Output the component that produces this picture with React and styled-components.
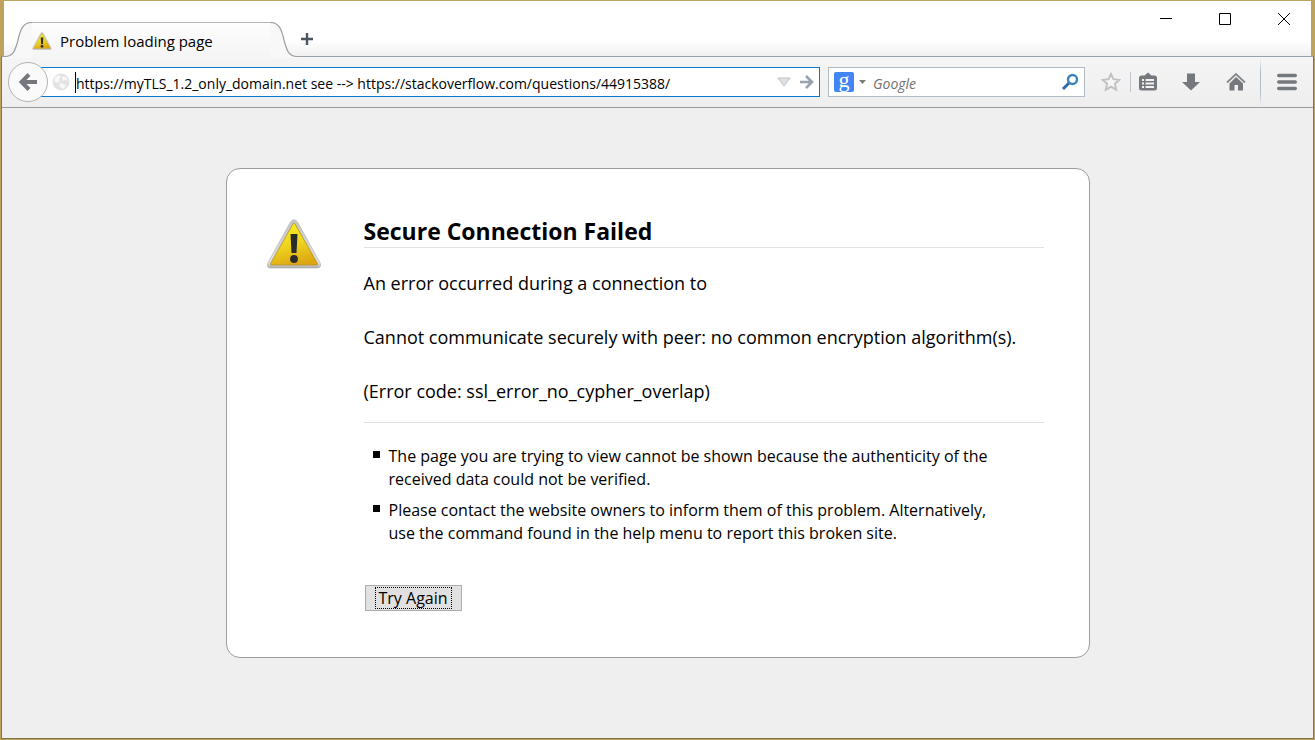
import { useId, useState } from "react";
import styled, { createGlobalStyle } from "styled-components";

const GlobalStyle = createGlobalStyle`
  * {
    box-sizing: border-box;
  }

  body {
    margin: 0;
    font-family: "Open Sans", "Noto Sans", sans-serif;
    color: #000;
  }

  button,
  input {
    font-family: inherit;
  }
`;

const Frame = styled.div`
  display: flex;
  flex-direction: column;
  min-height: 100vh;
  padding: 1px;
  background: #bfa35c;
`;

const TitleBar = styled.header`
  display: flex;
  justify-content: space-between;
  height: 56px;
  margin: 0 3px;
  background: linear-gradient(#fff 70%, #efefef);
`;

const TabStrip = styled.div`
  display: flex;
  align-items: flex-end;
  margin-left: -2px;
`;

const Tab = styled.div`
  display: flex;
  position: relative;
  height: 36px;
  margin-bottom: -1px;
`;

const TabLabel = styled.button`
  display: flex;
  align-items: center;
  gap: 8px;
  width: 238px;
  padding: 0;
  border: 0;
  border-top: 1px solid #b4b8bd;
  background: linear-gradient(#fdfdfd, #f5f5f5);
  color: #000;
  font-size: 15px;
  text-align: left;
`;

const NewTab = styled.button`
  display: flex;
  margin: 0 0 11px;
  padding: 0;
  border: 0;
  background: none;
`;

const WindowControls = styled.div`
  display: flex;
  align-items: flex-start;
  margin-right: -2px;
`;

const WindowButton = styled.button`
  display: flex;
  align-items: center;
  justify-content: center;
  width: 59px;
  height: 36px;
  padding: 0;
  border: 0;
  background: none;
`;

const Client = styled.div`
  display: flex;
  flex: 1;
  flex-direction: column;
  border: 1px solid #84744a;
  border-top: 1px solid #98a0a8;
  margin-top: -1px;
`;

const NavBar = styled.nav`
  display: flex;
  align-items: center;
  height: 51px;
  padding: 0 16px 0 6px;
  border-bottom: 1px solid #9a9b9c;
  background: linear-gradient(#f5f5f5, #eee);
`;

const BackButton = styled.button`
  display: flex;
  align-items: center;
  justify-content: center;
  z-index: 1;
  width: 40px;
  height: 40px;
  padding: 0;
  border: 1px solid #b3b3b5;
  border-radius: 50%;
  background: #fafafa;
`;

const Field = styled.form`
  display: flex;
  align-items: center;
  height: 30px;
  border: 1px solid ${(props) => (props.$focused ? "#0a78d0" : "#b2bac4")};
  background: #fff;
`;

const UrlField = styled(Field)`
  flex: 1;
  margin-left: -8px;
  padding: 0 5px 0 11px;
`;

const SearchField = styled(Field)`
  width: 257px;
  margin-left: 8px;
  padding: 0 5px;
`;

const TextInput = styled.input`
  flex: 1;
  min-width: 0;
  height: 28px;
  padding: 2px 0 0;
  border: 0;
  outline: 0;
  background: none;
  color: #000;
  font-size: 14px;

  &::placeholder {
    color: #707070;
    font-style: italic;
    opacity: 1;
  }
`;

const Caret = styled.span`
  width: 1px;
  height: 21px;
  margin-left: 5px;
  background: #000;
`;

const FieldButton = styled.button`
  display: flex;
  padding: 0;
  border: 0;
  margin-left: ${(props) => props.$gap || 0}px;
  margin-right: ${(props) => props.$after || 0}px;
  background: none;
`;

const EngineBadge = styled.span`
  width: 20px;
  height: 20px;
  border-radius: 2px;
  background: #4285f4;
  color: #fff;
  font-family: "Liberation Serif", serif;
  font-size: 22px;
  line-height: 16px;
  text-align: center;
`;

const Tools = styled.div`
  display: flex;
  align-items: center;
  height: 100%;
  padding-left: 16px;
`;

const ToolButton = styled.button`
  display: flex;
  align-items: center;
  justify-content: center;
  width: 20px;
  height: 20px;
  margin-left: ${(props) => props.$gap || 0}px;
  padding: 0;
  border: 0;
  background: none;
`;

const Divider = styled.span`
  width: 1px;
  height: ${(props) => (props.$tall ? "48px" : "20px")};
  margin-left: ${(props) => props.$gap}px;
  background: ${(props) =>
    props.$tall
      ? "linear-gradient(transparent, #b0bccb 30%, #b0bccb 70%, transparent)"
      : "#c0c6ce"};
`;

const Page = styled.main`
  flex: 1;
  padding: 60px 24px;
  background: #efefef;
`;

const ErrorCard = styled.section`
  display: flex;
  align-items: flex-start;
  gap: 42px;
  max-width: 864px;
  margin: 0 auto;
  padding: 46px 45px 46px 39px;
  border: 1px solid #9c9c9c;
  border-radius: 14px;
  background: #fff;
`;

const CardIcon = styled.div`
  display: flex;
  flex: none;
  padding-top: 4px;
`;

const CardBody = styled.div`
  flex: 1;
  min-width: 0;
`;

const Title = styled.h1`
  margin: 0;
  border-bottom: 1px solid #e2e2e2;
  font-size: 23px;
  line-height: 32px;
`;

const Description = styled.div`
  padding: 22px 0 17px;
  border-bottom: 1px solid #e2e2e2;
  font-size: 18px;
  line-height: 27px;
`;

const Line = styled.p`
  margin: 0;

  & + & {
    margin-top: 27px;
  }
`;

const Hints = styled.ul`
  display: flex;
  flex-direction: column;
  gap: 8px;
  margin: 22px 0 40px;
  padding: 0 45px 0 9px;
  list-style: none;
  font-size: 16px;
  line-height: 23px;
`;

const Hint = styled.li`
  display: flex;
  gap: 9px;

  &::before {
    content: "";
    flex: none;
    width: 7px;
    height: 7px;
    margin-top: 6px;
    background: #000;
  }
`;

const RetryButton = styled.button`
  display: block;
  height: 26px;
  margin-left: 1px;
  padding: 0 9px;
  border: 1px solid #adadad;
  background: #e1e1e1;
  color: #000;
  font-size: 16px;
`;

const FocusRing = styled.span`
  display: block;
  padding: 0 3px;
  border: 1px dotted #000;
  line-height: 20px;
`;

function WarningIcon({ width, height }) {
  const id = useId();

  return (
    <svg width={width} height={height} viewBox="0 0 56 50" aria-hidden="true">
      <defs>
        <linearGradient id={`${id}-rim`} x1="0" y1="0" x2="0" y2="1">
          <stop offset="0" stopColor="#c4c4c4" />
          <stop offset=".9" stopColor="#e2e2e2" />
          <stop offset="1" stopColor="#a8a8a8" />
        </linearGradient>
        <linearGradient id={`${id}-fill`} x1="0.3" y1="0" x2="0.6" y2="1">
          <stop offset="0" stopColor="#f6ee20" />
          <stop offset=".5" stopColor="#efd51f" />
          <stop offset="1" stopColor="#dca511" />
        </linearGradient>
      </defs>
      <path
        d="M24.5 3Q28-1.5 31.5 3L54 43.500Q56 49 51 49H5Q0 49 2 43.500Z"
        fill={`url(#${id}-rim)`}
        stroke="#b5b5b5"
        strokeWidth=".7"
      />
      <path
        d="M27.200 4.500Q28 3.300 28.800 4.500L51.500 44.500Q52 46 50.500 46H5.500Q4 46 4.500 44.500Z"
        fill={`url(#${id}-fill)`}
        stroke="#b29126"
        strokeWidth=".8"
      />
      <path d="M24.500 15H31.500L30.500 34H25.500Z" fill="#2a2c2c" />
      <circle cx="28" cy="40" r="3.900" fill="#2a2c2c" />
    </svg>
  );
}

function TabCurve({ flip }) {
  return (
    <svg width="30" height="36" viewBox="0 0 30 36" aria-hidden="true">
      <g transform={flip ? "matrix(-1 0 0 1 30 0)" : undefined}>
        <path
          d="M0 36V34.500H3C11 34.500 13 29 15.500 20C18 9 20 .5 30 .5V36Z"
          fill="#f8f8f8"
        />
        <path
          d="M0 34.500H3C11 34.500 13 29 15.500 20C18 9 20 .5 30 .5"
          fill="none"
          stroke="#9aa0a7"
          strokeWidth="1.200"
        />
      </g>
    </svg>
  );
}

function GlobeIcon() {
  return (
    <svg width="18" height="18" viewBox="0 0 18 18" aria-hidden="true">
      <circle cx="9" cy="9" r="8.500" fill="#e3e3e3" />
      <path
        d="M3 4L7 2L9 4L7 6L8 8L5 10L2 8ZM11 3L15 5L16 8L13 7L11 8L10 5ZM8 10L12 11L14 13L11 16L9 15L7 12Z"
        fill="#f7f7f7"
      />
    </svg>
  );
}

function App() {
  const [url, setUrl] = useState(
    "https://myTLS_1.2_only_domain.net see --> https://stackoverflow.com/questions/44915388/"
  );
  const [query, setQuery] = useState("");

  const handleSubmit = (e) => {
    e.preventDefault();
  };

  return (
    <>
      <GlobalStyle />
      <Frame>
        <TitleBar>
          <TabStrip>
            <Tab>
              <TabCurve />
              <TabLabel type="button">
                <WarningIcon width={20} height={18} />
                Problem loading page
              </TabLabel>
              <TabCurve flip />
            </Tab>
            <NewTab type="button" aria-label="New tab">
              <svg width="14" height="14" viewBox="0 0 14 14">
                <path d="M7 1V13M1 7H13" stroke="#4c5660" strokeWidth="2.400" />
              </svg>
            </NewTab>
          </TabStrip>
          <WindowControls>
            <WindowButton type="button" aria-label="Minimize">
              <svg width="12" height="12" viewBox="0 0 12 12">
                <path d="M0 5.500H12" stroke="#000" />
              </svg>
            </WindowButton>
            <WindowButton type="button" aria-label="Maximize">
              <svg width="12" height="12" viewBox="0 0 12 12">
                <path d="M.5 .5H11.500V11.500H.5Z" fill="none" stroke="#000" />
              </svg>
            </WindowButton>
            <WindowButton type="button" aria-label="Close">
              <svg width="12" height="12" viewBox="0 0 12 12">
                <path d="M0 0L12 12M12 0L0 12" stroke="#000" />
              </svg>
            </WindowButton>
          </WindowControls>
        </TitleBar>

        <Client>
          <NavBar>
            <BackButton type="button" aria-label="Back">
              <svg width="18" height="18" viewBox="0 0 18 18">
                <path
                  d="M10 1.500L2.500 9L10 16.500M3 9H18"
                  fill="none"
                  stroke="#73777c"
                  strokeWidth="4"
                />
              </svg>
            </BackButton>
            <UrlField $focused onSubmit={handleSubmit}>
              <GlobeIcon />
              <Caret />
              <TextInput
                aria-label="Address"
                value={url}
                onChange={(e) => setUrl(e.target.value)}
              />
              <FieldButton type="button" aria-label="Show history">
                <svg width="14" height="10" viewBox="0 0 14 10">
                  <path d="M1 1H13L7 9Z" fill="#dce1e5" stroke="#bcc3c9" />
                </svg>
              </FieldButton>
              <FieldButton aria-label="Go" $gap={8}>
                <svg width="15" height="14" viewBox="0 0 15 14">
                  <path
                    d="M1 7H12M7 1L13 7L7 13"
                    fill="none"
                    stroke="#98a3ae"
                    strokeWidth="2.600"
                  />
                </svg>
              </FieldButton>
            </UrlField>
            <SearchField onSubmit={handleSubmit}>
              <FieldButton type="button" aria-label="Search engine" $after={6}>
                <EngineBadge>g</EngineBadge>
                <svg width="13" height="20" viewBox="0 0 13 20">
                  <path d="M5 8H12L8.500 12Z" fill="#7b7b7b" />
                </svg>
              </FieldButton>
              <TextInput
                aria-label="Search"
                placeholder="Google"
                value={query}
                onChange={(e) => setQuery(e.target.value)}
              />
              <FieldButton aria-label="Search the web">
                <svg width="18" height="18" viewBox="0 0 18 18">
                  <path d="M2 16L8 10" stroke="#2f6aa8" strokeWidth="3" />
                  <circle
                    cx="11.500"
                    cy="6.500"
                    r="4.500"
                    fill="#fff"
                    stroke="#3b85bd"
                    strokeWidth="2.400"
                  />
                </svg>
              </FieldButton>
            </SearchField>
            <Tools>
              <ToolButton type="button" aria-label="Bookmark this page">
                <svg width="20" height="20" viewBox="0 0 20 20">
                  <path
                    d="M10 2L12.400 7.200L18.300 7.900L13.900 11.700L15.200 17.800L10 14.700L4.800 17.800L6.100 11.700L1.700 7.900L7.600 7.200Z"
                    fill="#f5f5f5"
                    stroke="#c0c1c3"
                    strokeWidth="1.900"
                  />
                </svg>
              </ToolButton>
              <Divider $gap={9} />
              <ToolButton type="button" aria-label="Bookmarks" $gap={7}>
                <svg width="20" height="20" viewBox="0 0 20 20">
                  <path
                    d="M3.500 3.500H6.500L10 .5L13.500 3.500H16.500Q19 3.500 19 6V16Q19 18.500 16.500 18.500H3.500Q1 18.500 1 16V6Q1 3.500 3.500 3.500Z"
                    fill="#75787d"
                  />
                  <path
                    d="M4 7H6V9H4ZM7.500 7H16V9H7.500ZM4 10.500H6V12.500H4ZM7.500 10.500H16V12.500H7.500ZM4 14H6V16H4ZM7.500 14H16V16H7.500Z"
                    fill="#f2f2f2"
                  />
                </svg>
              </ToolButton>
              <ToolButton type="button" aria-label="Downloads" $gap={23}>
                <svg width="20" height="20" viewBox="0 0 20 20">
                  <path
                    d="M6 1.500H14V10H19L10 18.500L1 10H6Z"
                    fill="#75787d"
                  />
                </svg>
              </ToolButton>
              <ToolButton type="button" aria-label="Home" $gap={25}>
                <svg width="20" height="20" viewBox="0 0 20 20">
                  <path
                    d="M1 10.500L10 2L19 10.500"
                    fill="none"
                    stroke="#85888c"
                    strokeWidth="1.800"
                  />
                  <path
                    d="M10 5L17 11.500V18.500H12V13H8.500V18.500H3.500V11.500Z"
                    fill="#75787d"
                  />
                </svg>
              </ToolButton>
              <Divider $tall $gap={14} />
              <ToolButton type="button" aria-label="Open menu" $gap={16}>
                <svg width="20" height="18" viewBox="0 0 20 18">
                  <path
                    d="M1.700 2.500H18.300M1.700 9H18.300M1.700 15.500H18.300"
                    stroke="#75787d"
                    strokeWidth="3.400"
                    strokeLinecap="round"
                  />
                </svg>
              </ToolButton>
            </Tools>
          </NavBar>

          <Page>
            <ErrorCard>
              <CardIcon>
                <WarningIcon width={56} height={50} />
              </CardIcon>
              <CardBody>
                <Title>Secure Connection Failed</Title>
                <Description>
                  <Line>An error occurred during a connection to</Line>
                  <Line>
                    Cannot communicate securely with peer: no common encryption
                    algorithm(s).
                  </Line>
                  <Line>(Error code: ssl_error_no_cypher_overlap)</Line>
                </Description>
                <Hints>
                  <Hint>
                    The page you are trying to view cannot be shown because the
                    authenticity of the received data could not be verified.
                  </Hint>
                  <Hint>
                    Please contact the website owners to inform them of this
                    problem. Alternatively, use the command found in the help
                    menu to report this broken site.
                  </Hint>
                </Hints>
                <RetryButton type="button">
                  <FocusRing>Try Again</FocusRing>
                </RetryButton>
              </CardBody>
            </ErrorCard>
          </Page>
        </Client>
      </Frame>
    </>
  );
}

export default App;
